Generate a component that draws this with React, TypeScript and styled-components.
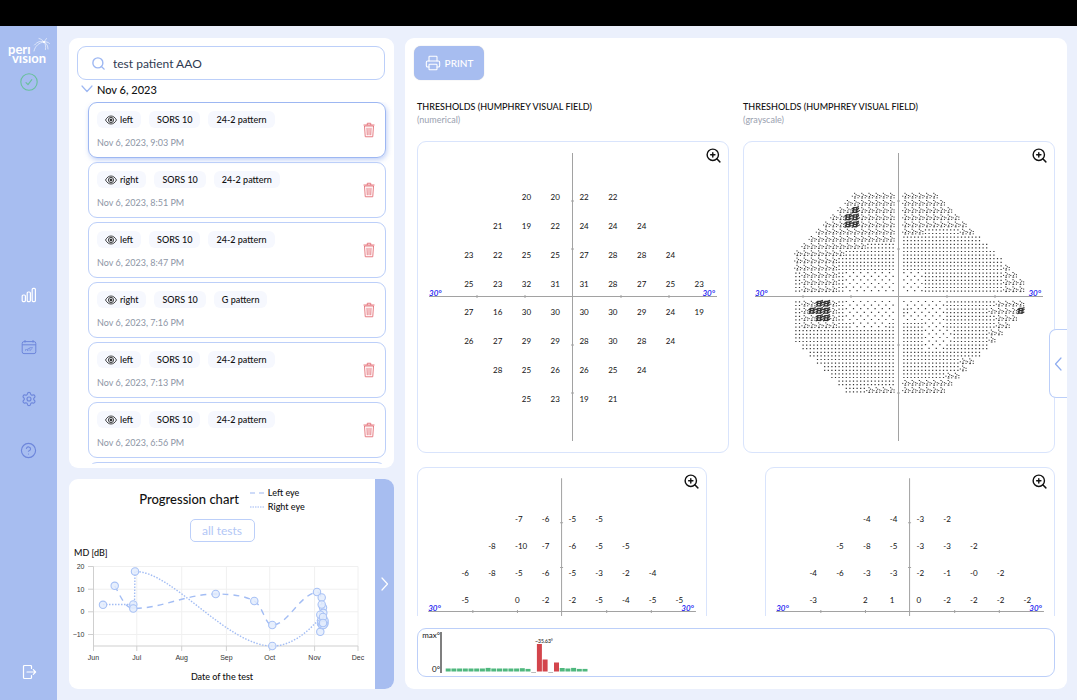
import React from "react";
import styled, { createGlobalStyle } from "styled-components";
import { CircleHelp, Printer, Search, Settings, ZoomIn } from "lucide-react";

const FONT = 'Lato, "Open Sans", sans-serif';
const BLUE = "#a7bdf0";
const LINE = "#bccff9";
const SOFT_LINE = "#d9e4fc";

const GlobalStyle = createGlobalStyle`
  *, *::before, *::after { box-sizing: border-box; }
  body { margin: 0; font-family: ${FONT}; color: #111; background: #ebf0fc; }
  button, input { font: inherit; color: inherit; }
  button { padding: 0; border: 0; background: none; cursor: pointer; }
`;

/* ---------- shell ---------- */
const Page = styled.div`
  display: flex;
  flex-direction: column;
  height: 100vh;
  min-height: 640px;
`;
const TopStrip = styled.header`
  flex: none;
  height: 26px;
  background: #000;
`;
const Body = styled.div`
  flex: 1;
  min-height: 0;
  display: flex;
`;
const Sidebar = styled.aside`
  flex: none;
  width: 57px;
  padding: 11px 0 16px;
  display: flex;
  flex-direction: column;
  align-items: center;
  justify-content: space-between;
  background: ${BLUE};
`;
const Brand = styled.div`
  display: flex;
  flex-direction: column;
  align-items: center;
  gap: 8px;
  svg { display: block; }
`;
const Nav = styled.nav`
  display: flex;
  flex-direction: column;
  gap: 28px;
  padding-bottom: 6px;
`;
const NavButton = styled.button<{ $active?: boolean }>`
  width: 24px;
  height: 24px;
  display: grid;
  place-items: center;
  color: ${(p) => (p.$active ? "#fff" : "#6d86db")};
`;
const Main = styled.main`
  flex: 1;
  min-width: 0;
  display: grid;
  grid-template-columns: minmax(0, 325fr) minmax(0, 662fr);
  gap: 11px;
  padding: 12px 10px 11px 12px;
`;
const LeftColumn = styled.div`
  min-height: 0;
  display: flex;
  flex-direction: column;
  gap: 11px;
`;
const Panel = styled.section`
  background: #fff;
  border-radius: 9px;
`;

/* ---------- patient list ---------- */
const PatientPanel = styled(Panel)`
  flex: 1;
  min-height: 0;
  display: flex;
  flex-direction: column;
  padding: 8px 0 4px;
`;
const SearchBox = styled.label`
  flex: none;
  display: flex;
  align-items: center;
  gap: 7px;
  height: 34px;
  margin: 0 9px 0 8px;
  padding: 0 13px;
  border: 1px solid ${LINE};
  border-radius: 9px;
  color: #9db7f2;
`;
const SearchInput = styled.input`
  flex: 1;
  min-width: 0;
  border: 0;
  outline: 0;
  padding: 0;
  background: none;
  color: #2f3a52;
  font-size: 12px;
`;
const DateToggle = styled.button`
  flex: none;
  display: flex;
  align-items: center;
  gap: 4px;
  height: 22px;
  padding: 0 0 4px 12px;
  font-size: 11px;
  font-weight: 500;
  svg { color: #9db7f2; }
`;
const TestList = styled.ul`
  flex: 1;
  min-height: 0;
  margin: 0;
  padding: 0 8px 0 19px;
  list-style: none;
  overflow-y: auto;
  scrollbar-width: none;
`;
const TestCard = styled.li<{ $selected?: boolean }>`
  display: flex;
  align-items: center;
  justify-content: space-between;
  height: 56px;
  margin-bottom: 4px;
  padding: 0 8px;
  border: 1px solid ${(p) => (p.$selected ? "#9db7f2" : LINE)};
  border-radius: 9px;
  box-shadow: ${(p) => (p.$selected ? "1px 2px 5px rgba(140, 170, 240, 0.55)" : "none")};
`;
const TestInfo = styled.div`
  display: flex;
  flex-direction: column;
  gap: 9px;
`;
const Chips = styled.div`
  display: flex;
  gap: 8px;
`;
const Chip = styled.span`
  display: flex;
  align-items: center;
  gap: 3px;
  height: 17px;
  padding: 0 8px;
  border-radius: 6px;
  background: #f6f8fe;
  font-size: 9px;
  font-weight: 500;
  white-space: nowrap;
`;
const Stamp = styled.time`
  font-size: 9px;
  line-height: 12px;
  color: #8d95a5;
`;
const DeleteButton = styled.button`
  display: grid;
  place-items: center;
  width: 16px;
  height: 18px;
`;

/* ---------- progression ---------- */
const ProgressPanel = styled(Panel)`
  flex: none;
  height: 210px;
  display: flex;
  overflow: hidden;
`;
const ProgressContent = styled.div`
  flex: 1;
  min-width: 0;
  display: flex;
  flex-direction: column;
  align-items: center;
  padding-top: 7px;
`;
const ProgressHead = styled.div`
  display: flex;
  align-items: center;
  gap: 11px;
`;
const ProgressTitle = styled.h2`
  margin: 0;
  font-size: 13px;
  line-height: 26px;
  padding-bottom: 2px;
  font-weight: 500;
`;
const Legend = styled.ul`
  margin: 0;
  padding: 0;
  list-style: none;
`;
const LegendItem = styled.li`
  display: flex;
  align-items: center;
  gap: 4px;
  font-size: 9px;
  line-height: 14px;
  font-weight: 500;
`;
const AllTests = styled.button`
  flex: none;
  width: 65px;
  height: 23px;
  margin-top: 5px;
  border: 1px solid ${LINE};
  border-radius: 5px;
  color: #b3c7f6;
  font-size: 12px;
`;
const AxisName = styled.div<{ $start?: boolean }>`
  align-self: ${(p) => (p.$start ? "flex-start" : "center")};
  padding-left: ${(p) => (p.$start ? "5px" : "0")};
  margin-top: ${(p) => (p.$start ? "5px" : "6px")};
  font-size: 9px;
  line-height: 12px;
  font-weight: 500;
`;
const ChartSvg = styled.svg`
  display: block;
  width: 100%;
  height: 106px;
  flex: none;
`;
const Expander = styled.button`
  flex: none;
  width: 19px;
  display: grid;
  place-items: center;
  background: ${BLUE};
  color: #fff;
`;

/* ---------- results ---------- */
const ResultPanel = styled(Panel)`
  position: relative;
  min-height: 0;
  display: flex;
  flex-direction: column;
  padding: 8px 12px 12px 9px;
`;
const PrintButton = styled.button`
  flex: none;
  align-self: flex-start;
  display: flex;
  align-items: center;
  justify-content: center;
  gap: 4px;
  width: 70px;
  height: 34px;
  border-radius: 7px;
  background: ${BLUE};
  box-shadow: 0 0 1px rgba(60, 70, 100, 0.35);
  color: #fff;
  font-size: 10px;
  font-weight: 500;
`;
const Results = styled.div`
  flex: 1;
  min-height: 0;
  overflow-y: auto;
  scrollbar-width: none;
  display: grid;
  grid-template-columns: repeat(2, minmax(0, 1fr));
  align-content: start;
  gap: 14px;
  padding: 21px 0 0 3px;
`;
const Heading = styled.h3`
  margin: 0;
  font-size: 9px;
  line-height: 12px;
  font-weight: 500;
`;
const SubHeading = styled.p`
  margin: 0;
  font-size: 9px;
  line-height: 14px;
  color: #9aa1b0;
`;
const PlotCard = styled.div<{ $small?: boolean; $end?: boolean }>`
  position: relative;
  width: ${(p) => (p.$small ? "93%" : "100%")};
  justify-self: ${(p) => (p.$end ? "end" : "start")};
  border: 1px solid ${SOFT_LINE};
  border-radius: 9px;
  svg { display: block; }
`;
const PlotSvg = styled.svg`
  width: 100%;
  height: auto;
`;
const ZoomButton = styled.button`
  position: absolute;
  top: 5px;
  right: 6px;
  width: 17px;
  height: 17px;
  color: #111;
`;
const Reliability = styled.div`
  flex: none;
  height: 49px;
  margin: 12px 0 0 3px;
  border: 1px solid ${LINE};
  border-radius: 9px;
  svg { display: block; }
`;
const DrawerTab = styled.button`
  position: absolute;
  right: 0;
  top: 291px;
  width: 18px;
  height: 69px;
  padding-right: 2px;
  display: grid;
  place-items: center;
  border: 1px solid ${LINE};
  border-right: 0;
  border-radius: 7px 0 0 7px;
  background: #fff;
  color: #8fadf0;
`;

/* ---------- icons ---------- */
const Chevron = ({ to }: { to: "left" | "right" | "down" }) => {
  const d = { left: "M7 1L1.500 7L7 13", right: "M1 1L6.500 7L1 13", down: "M1 1L6 6.500L11 1" }[to];
  const [w, h] = to === "down" ? [12, 8] : [8, 14];
  return (
    <svg width={w} height={h} viewBox={`0 0 ${w} ${h}`} fill="none" stroke="currentColor" strokeWidth="1.200" strokeLinecap="round" strokeLinejoin="round">
      <path d={d} />
    </svg>
  );
};
const EyeIcon = () => (
  <svg width="12" height="10" viewBox="0 0 24 20" fill="none" stroke="#222" strokeWidth="1.700">
    <path d="M1 10C4 4.500 8 2 12 2s8 2.500 11 8c-3 5.500-7 8-11 8S4 15.500 1 10z" />
    <circle cx="12" cy="10" r="5.200" />
    <circle cx="12" cy="10" r="2" fill="#222" />
  </svg>
);
const TrashIcon = () => (
  <svg width="12" height="16" viewBox="0 0 24 32" fill="none" stroke="#e36d75" strokeWidth="1.800">
    <path d="M1 6h22M8.500 6V2.500h7V6M3 8l1.500 21.500h15L21 8M3 8h18" />
    <path d="M8 11.500l.5 15M12 11.500v15M16 11.500l-.5 15" strokeWidth="1.800" />
  </svg>
);
const BarsIcon = () => (
  <svg width="16" height="16" viewBox="0 0 16 16" fill="none" stroke="currentColor" strokeWidth="1.200">
    <rect x="1.200" y="8" width="3.200" height="6.600" rx="1" />
    <rect x="6.200" y="5" width="3.200" height="9.600" rx="1" />
    <rect x="11.200" y="1.400" width="3.200" height="13.200" rx="1" />
  </svg>
);
const CalendarIcon = () => (
  <svg width="16" height="16" viewBox="0 0 16 16" fill="none" stroke="currentColor" strokeWidth="1">
    <rect x="1.200" y="2.600" width="13.600" height="12" rx="1.800" />
    <path d="M1.200 5.800h13.600M4 1v2.600M12 1v2.600" />
    <path d="M4.500 12v-1.500h2v1.500M7 12V9.500h2V12M9.500 11.500L11.500 8.500M8.500 8.500h3" strokeWidth="0.600" />
  </svg>
);
const LogoutIcon = () => (
  <svg width="16" height="16" viewBox="0 0 16 16" fill="none" stroke="currentColor" strokeWidth="1.200" strokeLinecap="round" strokeLinejoin="round">
    <path d="M10.500 4.500V2.500a1 1 0 0 0-1-1H3.500a1 1 0 0 0-1 1v11a1 1 0 0 0 1 1h6a1 1 0 0 0 1-1v-2" />
    <path d="M6 8h8.500M12.300 5.700L14.600 8l-2.300 2.300" />
  </svg>
);
const Logo = () => (
  <svg width="42" height="28" viewBox="0 0 42 28" role="img" aria-label="peri vision">
    <text fill="#fff" fontFamily={FONT} fontWeight="700" fontSize="13">
      <tspan x="0" y="17">perı</tspan>
      <tspan x="4" y="26">vısıon</tspan>
    </text>
    <g fill="none" stroke="#fff" strokeWidth="0.600" strokeLinecap="round">
      <path d="M36 5C31 5.500 27 9 26 14M36 5C33 3.500 29.500 4.500 26.500 8M36 5C37.500 6.500 38 9.500 37.500 12.500M36 5C39 6.500 40 9 40 12M36 5C34.500 3 33 2 31 1.500M36 5L38.500 1.500M36 5C38 4.500 40 5 41.500 6.500" />
      <circle cx="36" cy="5" r="0.800" fill="#fff" />
    </g>
  </svg>
);
const CheckBadge = () => (
  <svg width="18" height="18" viewBox="0 0 18 18" fill="none" stroke="#68c09b" strokeWidth="1.100" strokeLinecap="round" strokeLinejoin="round">
    <circle cx="9" cy="9" r="8.200" />
    <path d="M6 9.600l2 2 3.800-5" />
  </svg>
);

/* ---------- visual field plots ---------- */
type FieldRow = { y: number; from: number; values: (string | null)[] };
const row = (y: number, from: number, text: string): FieldRow => ({
  y,
  from,
  values: text.split(" ").map((v) => (v === "." ? null : v)),
});

const THRESHOLDS = [
  row(21, -9, "20 20 22 22"),
  row(15, -15, "21 19 22 24 24 24"),
  row(9, -21, "23 22 25 25 27 28 28 24"),
  row(3, -21, "25 23 32 31 31 28 27 25 23"),
  row(-3, -21, "27 16 30 30 30 30 29 24 19"),
  row(-9, -21, "26 27 29 29 28 30 28 24"),
  row(-15, -15, "28 25 26 26 25 24"),
  row(-21, -9, "25 23 19 21"),
];
const TOTAL_DEVIATION = [
  row(21, -9, "-7 -6 -5 -5"),
  row(15, -15, "-8 -10 -7 -6 -5 -5"),
  row(9, -21, "-6 -8 -5 -6 -5 -3 -2 -4"),
  row(3, -21, "-5 . 0 -2 -2 -5 -4 -5 -5"),
];
const PATTERN_DEVIATION = [
  row(21, -9, "-4 -4 -3 -2"),
  row(15, -15, "-5 -8 -5 -3 -3 -2"),
  row(9, -21, "-4 -6 -3 -3 -2 -1 -0 -2"),
  row(3, -21, "-3 . 2 1 0 -2 -2 -2 -2"),
];

/* Shade runs per row, counted outwards from the vertical axis:
   s = sparse, d = dotted, m = medium, k = dark. */
const UPPER_LEFT = ["m6", "m7", "m5k1m2", "m5k2m2", "m5k2m3", "m11", "m12", "d4m9", "d7m7", "d8m6", "d8m6", "s7d1m5d1", "s7d1m5d1", "s7d1m5d1"];
const UPPER_RIGHT = ["m5", "m6", "m7", "m8", "m9", "m3d5m2", "d11", "d12", "d13", "d14", "d14m1", "s3d11m2", "s3d11m3", "s3d11m3"];
const LOWER_LEFT = ["s7d1m1k2m2d1", "s7d1m1k3m1d1", "s7d1m1k2m2d1", "d1s5d2m5d1", "d14", "d14", "d13", "d12", "d11", "d10", "d9", "d8", "m4d3"];
const LOWER_RIGHT = ["s6d7m4", "d1s5d6m4k1", "s6d7m3", "d3s3d7m2", "d3s4d5m2", "d3s4d5m1", "d3s3d6", "d11", "d8m2", "d8m1", "d6m2", "m7", "m6"];

const expand = (runs: string) =>
  [...runs.matchAll(/([sdmk])(\d+)/g)].map((r) => r[1].repeat(Number(r[2]))).join("");

const TILE = 7.2;
function Shades({ c }: { c: number }) {
  const tiles: React.ReactNode[] = [];
  const add = (rows: string[], sx: number, rowOf: (i: number) => number) =>
    rows.forEach((runs, i) =>
      [...expand(runs)].forEach((shade, n) => {
        const x = c + sx * (n + 1) * TILE;
        const y = c + rowOf(i) * TILE;
        tiles.push(<use key={`${x}:${y}`} href={`#shade-${shade}`} x={x.toFixed(1)} y={y.toFixed(1)} />);
      })
    );
  add(UPPER_LEFT, -1, (i) => i - 14);
  add(UPPER_RIGHT, 1, (i) => i - 14);
  add(LOWER_LEFT, -1, (i) => i + 1);
  add(LOWER_RIGHT, 1, (i) => i + 1);
  return (
    <g>
      <defs>
        <path id="shade-s" d="M-2.400-2.200h1.200M1.200 1.400h1.200" stroke="#333" strokeWidth="1.200" />
        <path id="shade-d" d="M-2.400-1.800h1.200M1.200-1.800h1.200M-2.400 1.800h1.200M1.200 1.800h1.200" stroke="#333" strokeWidth="1.200" />
        <path id="shade-m" d="M-3.500 0.500h1.100M-1.300-2.400h1.200M0.200-0.900h1.200M-0.800 0.800h1.100M-1.300 2.300h1.800M2.200-0.200h1.100M2.200 2.100h1.100" stroke="#333" strokeWidth="1" />
        <path id="shade-k" d="M-3.600-0.800l2-1.600h2.600l2.600-1M-3.200 1l2.400-1.400 2.600 0.200 1.800-1.800M-3.600 2.800l2.200-0.800 2.400 0.400 2.400-1.600M-1.400-2.400l-0.600 4.400M1.600-2.600l-0.600 4.600" stroke="#333" strokeWidth="1.300" fill="none" />
      </defs>
      {tiles}
    </g>
  );
}

function FieldPlot({ size, rows, shaded, label }: { size: number; rows?: FieldRow[]; shaded?: boolean; label: string }) {
  const c = size / 2;
  const half = (size * 144) / 310;
  const deg = half / 30;
  const inset = size > 300 ? 8 : 7;
  const ticks = [-20, -10, 10, 20];
  return (
    <PlotSvg viewBox={`0 0 ${size} ${size}`} role="img" aria-label={label}>
      <g stroke="#a2a2a2" strokeWidth="1">
        <path d={`M${c - 0.5} ${c - half}V${c + half}M${c - half} ${c - 0.5}H${c + half}`} />
        {ticks.map((t) => (
          <path key={t} d={`M${c - 2} ${c + t * deg}h3M${c + t * deg} ${c - 2}v3`} />
        ))}
      </g>
      {shaded && <Shades c={c - 0.5} />}
      <g fontFamily={FONT} fontSize="8" fill="#111">
        {rows?.map((r) =>
          r.values.map((v, i) =>
            v === null ? null : (
              <text key={`${r.y}:${i}`} x={c + (r.from + i * 6) * deg - inset} y={c - r.y * deg + 4}>
                {v}
              </text>
            )
          )
        )}
      </g>
      <g fontFamily={FONT} fontSize="8" fontWeight="600" fontStyle="italic" fill="#1010f0">
        <text x={c - half} y={c - 1}>30°</text>
        <text x={c + half - 2} y={c - 1} textAnchor="end">30°</text>
      </g>
    </PlotSvg>
  );
}

function Plot(props: { size: number; rows?: FieldRow[]; shaded?: boolean; label: string; small?: boolean; end?: boolean }) {
  const { small, end, ...plot } = props;
  return (
    <PlotCard $small={small} $end={end}>
      <FieldPlot {...plot} />
      <ZoomButton aria-label={`Enlarge ${plot.label}`}>
        <ZoomIn size={17} strokeWidth={2} />
      </ZoomButton>
    </PlotCard>
  );
}

/* ---------- progression chart ---------- */
const MONTHS: [string, number][] = [["Jun", 24.5], ["Jul", 67.8], ["Aug", 112.7], ["Sep", 157.4], ["Oct", 200.7], ["Nov", 245.6], ["Dec", 289]];
const LEVELS: [string, number][] = [["20", 7.5], ["10", 30.2], ["0", 52.8], ["−10", 75.5]];
const POINTS = [
  [45.7, 26.8], [64.3, 45.5], [64.3, 49.5], [146.7, 35], [185.3, 42], [203.3, 66], [248, 33],
  [34, 45.8], [66, 12.4], [203.3, 87], [252.7, 38.5], [254, 48.5], [252.7, 45.5], [254.3, 53.8],
  [251.3, 72.8], [252, 61.5], [252, 64.5], [255.5, 64.5], [255.5, 61.5], [253, 66], [254.5, 66],
  [251.3, 55.7], [254, 58], [254, 64],
];

function ProgressChart() {
  return (
    <ChartSvg viewBox="0 0 306 106" role="img" aria-label="Mean deviation over time">
      <g stroke="#f0f0f0" strokeWidth="1">
        {MONTHS.map(([m, x]) => <path key={m} d={`M${x} 7.500V87`} />)}
        {LEVELS.map(([l, y]) => <path key={l} d={`M24.500 ${y}H289`} />)}
      </g>
      <g stroke="#cfcfcf" strokeWidth="1" fill="none">
        <path d="M24.500 7.500V87H289" />
        {MONTHS.map(([m, x]) => <path key={m} d={`M${x} 87v5`} />)}
        {LEVELS.map(([l, y]) => <path key={l} d={`M19 ${y}h5.500`} />)}
      </g>
      <g fontFamily='"Liberation Sans", Arial, sans-serif' fontSize="7" fill="#333">
        {MONTHS.map(([m, x]) => <text key={m} x={x} y="101" textAnchor="middle">{m}</text>)}
        {LEVELS.map(([l, y]) => <text key={l} x="15.500" y={y + 2.5} textAnchor="end">{l}</text>)}
      </g>
      <g fill="none" stroke="#a3bdf4" strokeWidth="1.400">
        <path strokeDasharray="6 5" d="M45.700 26.800C51 36 56 49.500 64.300 49.500C92 49.500 118 35 146.700 35C164 35 176 37 185.300 42C194 47 196 66 203.300 66C219 66 230 36 248 33C252 33 253 40 252.700 50" />
        <path strokeDasharray="1.500 1.500" d="M34 45.500H65.500L66 12.400C104 12.400 158 87 203.300 87C222 87 238 74 252 58" />
      </g>
      <circle cx="254" cy="63" r="5.500" fill="#a9c2f5" />
      <g fill="#e3ecfd" fillOpacity="0.850" stroke="#a9c2f5" strokeWidth="1.100">
        {POINTS.map(([x, y], i) => <circle key={i} cx={x} cy={y} r="3.700" />)}
      </g>
    </ChartSvg>
  );
}

/* ---------- reliability bars ---------- */
const BARS = [3, 3, 3, 3, 3, 3, 3, 3.6, 3, 3, 3, 3, 3, 3.3, 2.6, 0, 27.5, 12, 0, 9, 3.5, 3, 3.6, 2.6, 2.6];
function ReliabilityBars() {
  return (
    <svg width="180" height="47" viewBox="0 0 180 47" role="img" aria-label="Fixation deviation">
      <g fontFamily={FONT} fontSize="8" fill="#111" textAnchor="end">
        <text x="22" y="9">max°</text>
        <text x="22" y="43">0°</text>
      </g>
      <path d="M23 3V44" stroke="#555" strokeWidth="1.500" />
      {BARS.map((h, i) => {
        const x = 27.7 + i * 5.7;
        return h === 0 ? (
          <rect key={i} x={x} y="43" width="4.800" height="1" fill="#bbb" />
        ) : (
          <rect key={i} x={x} y={42.5 - h} width="5" height={h} fill={h > 5 ? "#d3454c" : "#4fb87e"} />
        );
      })}
      <text x="126" y="14" fontFamily={FONT} fontSize="5" fontWeight="500" textAnchor="middle" fill="#111">~35.63°</text>
    </svg>
  );
}

/* ---------- page ---------- */
const TESTS = [
  { eye: "left", pattern: "24-2 pattern", time: "9:03 PM" },
  { eye: "right", pattern: "24-2 pattern", time: "8:51 PM" },
  { eye: "left", pattern: "24-2 pattern", time: "8:47 PM" },
  { eye: "right", pattern: "G pattern", time: "7:16 PM" },
  { eye: "left", pattern: "24-2 pattern", time: "7:13 PM" },
  { eye: "left", pattern: "24-2 pattern", time: "6:56 PM" },
];

export default function App() {
  return (
    <Page>
      <GlobalStyle />
      <TopStrip />
      <Body>
        <Sidebar>
          <Brand>
            <Logo />
            <CheckBadge />
          </Brand>
          <Nav aria-label="Main">
            <NavButton $active aria-label="Results"><BarsIcon /></NavButton>
            <NavButton aria-label="Calendar"><CalendarIcon /></NavButton>
            <NavButton aria-label="Settings"><Settings size={16} strokeWidth={1.7} /></NavButton>
            <NavButton aria-label="Help"><CircleHelp size={17} strokeWidth={1.6} /></NavButton>
          </Nav>
          <NavButton $active aria-label="Log out"><LogoutIcon /></NavButton>
        </Sidebar>
        <Main>
          <LeftColumn>
            <PatientPanel>
              <SearchBox>
                <Search size={15} strokeWidth={2.2} />
                <SearchInput aria-label="Search patient" defaultValue="test patient AAO" />
              </SearchBox>
              <DateToggle aria-expanded="true">
                <Chevron to="down" />
                Nov 6, 2023
              </DateToggle>
              <TestList>
                {TESTS.map((t, i) => (
                  <TestCard key={t.time} $selected={i === 0}>
                    <TestInfo>
                      <Chips>
                        <Chip><EyeIcon />{t.eye}</Chip>
                        <Chip>SORS 10</Chip>
                        <Chip>{t.pattern}</Chip>
                      </Chips>
                      <Stamp>Nov 6, 2023, {t.time}</Stamp>
                    </TestInfo>
                    <DeleteButton aria-label={`Delete test of ${t.time}`}><TrashIcon /></DeleteButton>
                  </TestCard>
                ))}
                <TestCard aria-hidden="true" />
              </TestList>
            </PatientPanel>
            <ProgressPanel>
              <ProgressContent>
                <ProgressHead>
                  <ProgressTitle>Progression chart</ProgressTitle>
                  <Legend>
                    <LegendItem>
                      <svg width="14" height="2"><path d="M0 1h14" stroke="#9db7f2" strokeDasharray="5 4" /></svg>
                      Left eye
                    </LegendItem>
                    <LegendItem>
                      <svg width="14" height="2"><path d="M0 1h14" stroke="#9db7f2" strokeDasharray="1.500 1" /></svg>
                      Right eye
                    </LegendItem>
                  </Legend>
                </ProgressHead>
                <AllTests>all tests</AllTests>
                <AxisName $start>MD [dB]</AxisName>
                <ProgressChart />
                <AxisName>Date of the test</AxisName>
              </ProgressContent>
              <Expander aria-label="Expand progression chart"><Chevron to="right" /></Expander>
            </ProgressPanel>
          </LeftColumn>
          <ResultPanel>
            <PrintButton>
              <Printer size={16} strokeWidth={1.6} />
              PRINT
            </PrintButton>
            <Results>
              <div>
                <Heading>THRESHOLDS (HUMPHREY VISUAL FIELD)</Heading>
                <SubHeading>(numerical)</SubHeading>
              </div>
              <div>
                <Heading>THRESHOLDS (HUMPHREY VISUAL FIELD)</Heading>
                <SubHeading>(grayscale)</SubHeading>
              </div>
              <Plot size={310} rows={THRESHOLDS} label="numerical thresholds" />
              <Plot size={310} shaded label="grayscale thresholds" />
              <Plot size={288} rows={TOTAL_DEVIATION} label="total deviation" small />
              <Plot size={288} rows={PATTERN_DEVIATION} label="pattern deviation" small end />
            </Results>
            <Reliability><ReliabilityBars /></Reliability>
            <DrawerTab aria-label="Open details"><Chevron to="left" /></DrawerTab>
          </ResultPanel>
        </Main>
      </Body>
    </Page>
  );
}
